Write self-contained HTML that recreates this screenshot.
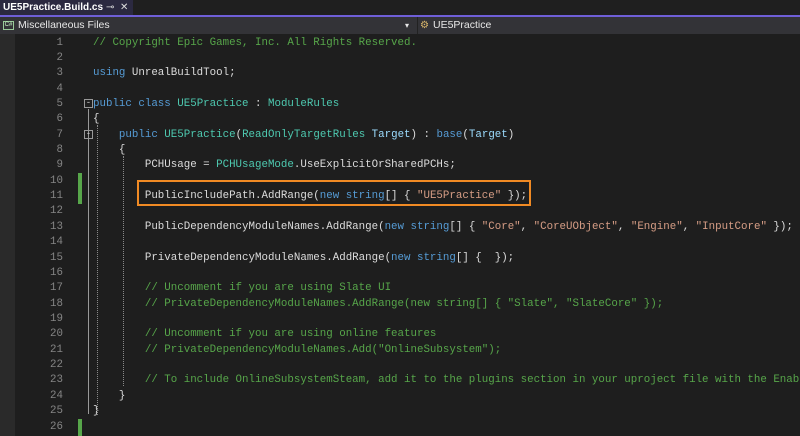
<!DOCTYPE html>
<html><head><meta charset="utf-8"><style>
*{margin:0;padding:0;box-sizing:border-box}
body{width:800px;height:436px;background:#1e1e1e;overflow:hidden;position:relative;font-family:"Liberation Sans",sans-serif}
#wrap{position:absolute;left:0;top:0;width:800px;height:436px;overflow:hidden}
#tabbar{position:absolute;left:0;top:0;width:800px;height:15px;background:#1f1f1f}
#tab{position:absolute;left:0;top:0;width:133px;height:15px;background:#2b2940;color:#fff;font-size:10px;font-weight:bold;line-height:15px;padding-left:3px;overflow:hidden;white-space:nowrap}
#tab span{font-weight:normal;color:#ddd;position:absolute;font-size:10px}
#purple{position:absolute;left:0;top:15px;width:800px;height:2px;background:#6f5fd8}
#nav{position:absolute;left:0;top:17px;width:800px;height:17px;background:#2d2d30;color:#e8e8e8;font-size:10.5px;line-height:17px}
#nav .l{position:absolute;left:0;top:0;width:418px;height:17px;background:#333337;padding-left:18px;border-right:1px solid #222}
#nav .r{position:absolute;left:418px;top:0;width:382px;height:17px;background:#333337;padding-left:15px}
#strip{position:absolute;left:0;top:34px;width:15px;height:402px;background:#2a2a2a}
.ln{position:absolute;left:15px;width:48px;text-align:right;color:#858585;font:10.8px "Liberation Mono",monospace}
.code{position:absolute;left:93px;white-space:pre;color:#dcdcdc;font:10.8px "Liberation Mono",monospace}
.k{color:#569cd6}.t{color:#4ec9b0}.s{color:#d69d85}.c{color:#57a64a}.p{color:#9cdcfe}
.g{position:absolute;left:78px;width:4px;background:#57a64a}
.dash{position:absolute;width:0;border-left:1px dotted #8a8a8a}
.fold{position:absolute;width:9px;height:9px;border:1px solid #999;color:#ccc;font:9px/7px "Liberation Mono",monospace;text-align:center}
</style></head><body><div id="wrap">
<div id="tabbar"><div id="tab">UE5Practice.Build.cs<span style="left:106px;top:0">⊸</span><span style="left:120px;top:0">✕</span></div></div>
<div id="purple"></div>
<div id="nav"><div class="l"><span style="position:absolute;left:3px;top:4px;width:11px;height:9px;border:1px solid #9c9;font-size:6px;line-height:7px;color:#cfc;text-align:center">C#</span>Miscellaneous Files<span style="position:absolute;left:405px;top:0;font-size:8px">▾</span></div><div class="r"><span style="position:absolute;left:2px;top:0;color:#d8b56a;font-size:10px">⚙</span>UE5Practice</div></div>
<div id="strip"></div>
<div id="lines"></div>
<div class="g" style="top:173px;height:31px"></div>
<div class="g" style="top:419px;height:17px"></div>
<div style="position:absolute;left:88px;top:109px;width:0;height:305px;border-left:1px solid #999"></div>
<div class="dash" style="left:97px;top:125px;height:290px"></div>
<div class="dash" style="left:123px;top:156px;height:230px"></div>
<div class="fold" style="left:84px;top:99px">-</div>
<div class="fold" style="left:84px;top:130px">-</div>
<div style="position:absolute;left:137px;top:180px;width:394px;height:26px;border:2px solid #f08a24"></div>
</div>
<script>
var L=[
'<span class="c">// Copyright Epic Games, Inc. All Rights Reserved.</span>',
'',
'<span class="k">using</span> UnrealBuildTool;',
'',
'<span class="k">public class</span> <span class="t">UE5Practice</span> : <span class="t">ModuleRules</span>',
'{',
'    <span class="k">public</span> <span class="t">UE5Practice</span>(<span class="t">ReadOnlyTargetRules</span> <span class="p">Target</span>) : <span class="k">base</span>(<span class="p">Target</span>)',
'    {',
'        PCHUsage = <span class="t">PCHUsageMode</span>.UseExplicitOrSharedPCHs;',
'',
'        PublicIncludePath.AddRange(<span class="k">new string</span>[] { <span class="s">"UE5Practice"</span> });',
'',
'        PublicDependencyModuleNames.AddRange(<span class="k">new string</span>[] { <span class="s">"Core"</span>, <span class="s">"CoreUObject"</span>, <span class="s">"Engine"</span>, <span class="s">"InputCore"</span> });',
'',
'        PrivateDependencyModuleNames.AddRange(<span class="k">new string</span>[] {  });',
'',
'        <span class="c">// Uncomment if you are using Slate UI</span>',
'        <span class="c">// PrivateDependencyModuleNames.AddRange(new string[] { "Slate", "SlateCore" });</span>',
'',
'        <span class="c">// Uncomment if you are using online features</span>',
'        <span class="c">// PrivateDependencyModuleNames.Add("OnlineSubsystem");</span>',
'',
'        <span class="c">// To include OnlineSubsystemSteam, add it to the plugins section in your uproject file with the Enab</span>',
'    }',
'}',
''];
var h='';
for(var i=0;i<L.length;i++){var y=35.5+i*15.36;
h+='<div class="ln" style="top:'+y+'px;line-height:15px">'+(i+1)+'</div>';
h+='<div class="code" style="top:'+y+'px;line-height:15px">'+L[i]+'</div>';}
document.getElementById('lines').innerHTML=h;
</script>
</body></html>
